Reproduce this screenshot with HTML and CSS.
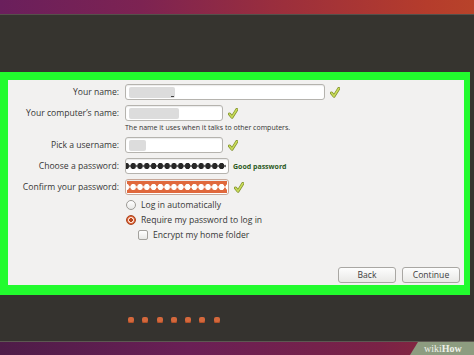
FILE: index.html
```html
<!DOCTYPE html>
<html>
<head>
<meta charset="utf-8">
<link rel="stylesheet" href="styles.css">
</head>
<body>
<div class="screen">
  <div class="wall-top"></div>
  <div class="dark-top"></div>
  <div class="green-row">
    <div class="green">
      <div class="panel">
        <div class="form">
          <div class="label">Your name:</div>
          <div class="fieldcell">
            <div class="field wide"><span class="blur b1"></span><span class="cursor"></span></div>
            <svg class="tick" viewBox="0 0 10 11"><path class="tick-o" d="M1.5 6 L4 9.2 L8.8 1.5"/><path class="tick-i" d="M1.5 6 L4 9.2 L8.8 1.5"/></svg>
          </div>

          <div class="label">Your computer’s name:</div>
          <div class="fieldcell">
            <div class="field mid"><span class="blur b2"></span></div>
            <svg class="tick" viewBox="0 0 10 11"><path class="tick-o" d="M1.5 6 L4 9.2 L8.8 1.5"/><path class="tick-i" d="M1.5 6 L4 9.2 L8.8 1.5"/></svg>
          </div>

          <div></div>
          <div class="hint">The name it uses when it talks to other computers.</div>

          <div class="label">Pick a username:</div>
          <div class="fieldcell">
            <div class="field mid"><span class="blur b3"></span></div>
            <svg class="tick" viewBox="0 0 10 11"><path class="tick-o" d="M1.5 6 L4 9.2 L8.8 1.5"/><path class="tick-i" d="M1.5 6 L4 9.2 L8.8 1.5"/></svg>
          </div>

          <div class="label">Choose a password:</div>
          <div class="fieldcell">
            <div class="field pw"><span class="dots dark"></span></div>
            <span class="good">Good password</span>
          </div>

          <div class="label">Confirm your password:</div>
          <div class="fieldcell">
            <div class="field pw confirm"><span class="dots light"></span></div>
            <svg class="tick" viewBox="0 0 10 11"><path class="tick-o" d="M1.5 6 L4 9.2 L8.8 1.5"/><path class="tick-i" d="M1.5 6 L4 9.2 L8.8 1.5"/></svg>
          </div>
        </div>

        <div class="options">
          <div class="opt"><span class="radio"></span>Log in automatically</div>
          <div class="opt"><span class="radio on"></span>Require my password to log in</div>
          <div class="opt sub"><span class="check"></span>Encrypt my home folder</div>
        </div>

        <div class="buttons">
          <button class="btn back">Back</button>
          <button class="btn cont">Continue</button>
        </div>
      </div>
    </div>
  </div>
  <div class="dark-bottom">
    <div class="progress">
      <span class="dot"></span><span class="dot"></span><span class="dot"></span><span class="dot"></span><span class="dot"></span><span class="dot"></span><span class="dot"></span>
    </div>
  </div>
  <div class="wall-bottom">
    <div class="wikihow"><span class="wiki">wiki</span><span class="how">How</span></div>
  </div>
</div>
</body>
</html>
```

FILE: styles.css
```css
* { box-sizing: border-box; }
html, body { margin: 0; padding: 0; }
body {
  width: 474px;
  height: 355px;
  overflow: hidden;
  background: #35332f;
  font-family: "Open Sans", "Noto Sans", sans-serif;
}
.screen { width: 474px; height: 355px; display: flex; flex-direction: column; }
.wall-top {
  height: 15px;
  background: linear-gradient(90deg, #6a1f5c 0%, #7d2352 30%, #9c2f3c 60%, #b53c2c 90%, #b8432a 100%);
  border-bottom: 1px solid #55504b;
}
.dark-top { height: 57px; background: #36342f; }
.green-row { display: flex; background: #36342f; }
.green {
  width: 470px;
  height: 223px;
  background: #22fb2e;
  padding: 8px 6px 10px 8px;
}
.panel {
  width: 456px;
  height: 205px;
  background: #f2f1f0;
  position: relative;
  padding: 4px 0 0 0;
  color: #363636;
  font-size: 8.6px;
}
.form {
  display: grid;
  grid-template-columns: 111px 1fr;
  column-gap: 6px;
  align-items: center;
}
.label { text-align: right; height: 16px; line-height: 16px; }
.fieldcell { display: flex; align-items: center; height: 16px; }
.form > .label:not(:first-child), .form > .fieldcell:not(:nth-child(2)) { margin-top: 5px; }
.field {
  position: relative;
  height: 16px;
  background: #fff;
  border: 1px solid #b5b3ae;
  border-radius: 3px;
  box-shadow: inset 0 1px 1px rgba(0,0,0,0.08);
  overflow: hidden;
}
.field.wide { width: 200px; }
.field.mid { width: 98px; }
.field.pw { width: 104px; }
.blur {
  position: absolute;
  top: 2px;
  left: 3px;
  height: 11px;
  background: #dcdcdc;
  border-radius: 2px;
  filter: blur(0.6px);
}
.b1 { width: 46px; }
.b2 { width: 50px; }
.b3 { width: 17px; }
.cursor {
  position: absolute;
  left: 45px;
  top: 11px;
  width: 3px;
  height: 1px;
  background: #444;
}
.tick { width: 10px; height: 11px; margin-left: 5px; }
.tick-o { fill: none; stroke: #7f8f2a; stroke-width: 3; stroke-linecap: round; stroke-linejoin: round; }
.tick-i { fill: none; stroke: #c9dc5a; stroke-width: 1.6; stroke-linecap: round; stroke-linejoin: round; }
.hint { height: 10px; line-height: 10px; font-size: 7px; margin-top: 2px; color: #333; white-space: nowrap; }
.hint + .label, .hint + .label + .fieldcell { margin-top: 4px !important; }
.dots {
  position: absolute;
  left: -3px;
  top: 2px;
  right: 2px;
  height: 10px;
  background-size: 6.8px 10px;
  background-repeat: repeat-x;
}
.dots.dark { background-image: radial-gradient(circle at 3.4px 5px, #262626 2.8px, transparent 3.3px); }
.field.confirm {
  border-color: #c7a899;
  background: #fff;
}
.field.confirm .dots {
  left: 1px; top: 1px; right: 1px; bottom: 1px; height: auto;
  background-color: #e0683c;
  background-image: radial-gradient(circle at 3.4px 6px, #fff 2.8px, transparent 3.3px);
  background-position: -4px 0;
}
.good { margin-left: 4px; font-weight: 700; font-size: 7px; color: #2c5a1e; }
.options { margin-left: 118px; margin-top: 2px; display: flex; flex-direction: column; }
.opt { display: flex; align-items: center; height: 15px; white-space: nowrap; }
.opt.sub { margin-left: 12px; }
.radio {
  width: 10px; height: 10px; border-radius: 50%;
  border: 1px solid #9c9a96;
  background: linear-gradient(#fff, #e8e8e6);
  margin-right: 5px;
  flex: none;
}
.radio.on {
  border-color: #a8431c;
  background: radial-gradient(circle, #b8461c 0 1.6px, #fbe2d6 1.9px 2.8px, #e0653a 3.1px);
}
.check {
  width: 10px; height: 10px; border-radius: 2px;
  border: 1px solid #a3a19d;
  background: linear-gradient(#fff, #e8e8e6);
  margin-right: 5px;
  flex: none;
}
.buttons {
  position: absolute;
  right: 4px;
  bottom: 2px;
  display: flex;
  gap: 6px;
}
.btn {
  width: 58px; height: 16px;
  font-family: inherit;
  font-size: 8.6px;
  color: #3c3c3c;
  background: linear-gradient(#fdfdfd, #e9e8e6);
  border: 1px solid #a9a7a3;
  border-radius: 3px;
  padding: 0;
  line-height: 14px;
}
.dark-bottom { height: 47px; background: #35332f; display: flex; align-items: flex-start; border-bottom: 1px solid #5d5852; }
.progress { display: flex; gap: 8.3px; margin: 22px 0 0 128px; }
.dot { width: 6px; height: 6px; border-radius: 2px; background: #d4683c; box-shadow: inset 0 -1px 0 #b04f28; }
.wall-bottom {
  flex: 1;
  position: relative;
  background: linear-gradient(90deg, #4e1c48 0%, #6a1f55 40%, #7a2246 80%, #8c2a3a 100%);
}
.wikihow {
  position: absolute;
  right: 0; bottom: 0;
  height: 13px;
  width: 64px;
  background: #8d9c80;
  clip-path: polygon(8px 0, 100% 0, 100% 100%, 0 100%);
  font-family: "Liberation Serif", serif;
  font-size: 10px;
  line-height: 13px;
  padding-left: 14px;
  color: #eef0e8;
}
.wiki { font-weight: 400; }
.how { font-weight: 700; }
```
